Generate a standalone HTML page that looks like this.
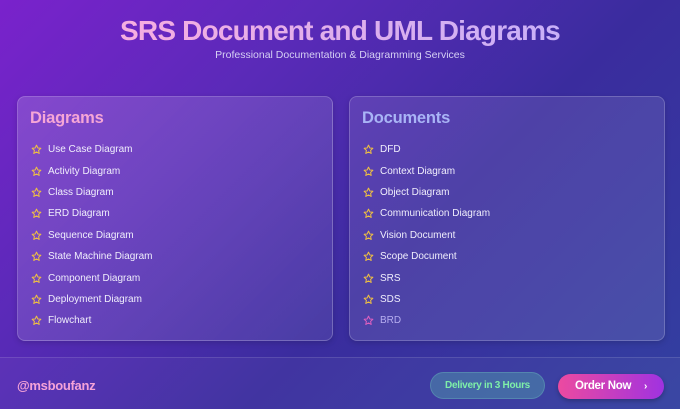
<!DOCTYPE html><html><head><style>
*{margin:0;padding:0;box-sizing:border-box}
body{width:680px;height:409px;overflow:hidden;font-family:"Liberation Sans",sans-serif;background:linear-gradient(135deg,#7a22cc 0%,#5a2ab8 30%,#3a2c9e 60%,#3240a0 100%);position:relative;color:#fff}
h1{position:absolute;top:15px;width:100%;text-align:center;font-size:28px;font-weight:bold;letter-spacing:-0.8px}
h1 span{background:linear-gradient(90deg,#f7aee0,#c8b0f8);-webkit-background-clip:text;color:transparent}
.sub{position:absolute;top:49px;width:100%;text-align:center;font-size:10.5px;color:#d6d0f4}
.card{position:absolute;top:96px;width:316px;height:245px;border-radius:8px;border:1px solid rgba(255,255,255,.2);background:rgba(255,255,255,.1);box-shadow:0 2px 6px rgba(0,0,0,.15)}
.card h2{position:absolute;left:12px;top:12px;font-size:16.5px;font-weight:bold;letter-spacing:-0.2px}
.card ul{list-style:none;position:absolute;left:13px;top:42px}
.card li{height:21.4px;font-size:10px;color:#f0eefc;display:flex;align-items:center}
.card li svg{width:11px;height:11px;margin-right:6px}
.foot{position:absolute;left:0;top:357px;width:680px;height:52px;border-top:1px solid rgba(255,255,255,.12);background:rgba(255,255,255,.04)}
</style></head><body>
<h1><span>SRS Document and UML Diagrams</span></h1>
<div class="sub">Professional Documentation &amp; Diagramming Services</div>
<div class="card" style="left:17px;background:linear-gradient(135deg,rgba(255,255,255,.16),rgba(255,255,255,.08))"><h2 style="color:#f6a6d6">Diagrams</h2><ul id="a"></ul></div>
<div class="card" style="left:349px"><h2 style="color:#a9b4f6">Documents</h2><ul id="b"></ul></div>
<div class="foot">
<div style="position:absolute;left:17px;top:20px;font-size:13px;font-weight:bold;color:#f6a3d8;letter-spacing:-0.3px">@msboufanz</div>
<div style="position:absolute;left:430px;top:14px;width:115px;height:27px;border-radius:14px;background:rgba(80,160,170,.45);border:1px solid rgba(120,200,200,.3);color:#7ef0a8;font-size:10px;font-weight:bold;text-align:center;line-height:25px;letter-spacing:-0.3px">Delivery in 3 Hours</div>
<div style="position:absolute;left:558px;top:16px;width:106px;height:25px;border-radius:13px;background:linear-gradient(90deg,#ec4aa0,#a032e0);font-size:11.5px;font-weight:bold;line-height:25px;padding-left:17px;box-shadow:0 2px 5px rgba(0,0,0,.25);letter-spacing:-0.3px">Order Now <span style="margin-left:10px;font-size:10px">›</span></div>
</div>
<script>
function star(c){return '<svg viewBox="0 0 24 24"><path d="M12 2.5l2.9 6.1 6.6.8-4.9 4.6 1.3 6.6L12 17.3l-5.9 3.3 1.3-6.6-4.9-4.6 6.6-.8z" fill="none" stroke="'+c+'" stroke-width="2.2" stroke-linejoin="round"/></svg>'}
var A=["Use Case Diagram","Activity Diagram","Class Diagram","ERD Diagram","Sequence Diagram","State Machine Diagram","Component Diagram","Deployment Diagram","Flowchart"];
var B=["DFD","Context Diagram","Object Diagram","Communication Diagram","Vision Document","Scope Document","SRS","SDS","BRD"];
document.getElementById('a').innerHTML=A.map(t=>'<li>'+star('#f2c240')+t+'</li>').join('');
document.getElementById('b').innerHTML=B.map((t,i)=>i==8?'<li style="color:#b6aef0">'+star('#e060c0')+t+'</li>':'<li>'+star('#f2c240')+t+'</li>').join('');
</script>
</body></html>
